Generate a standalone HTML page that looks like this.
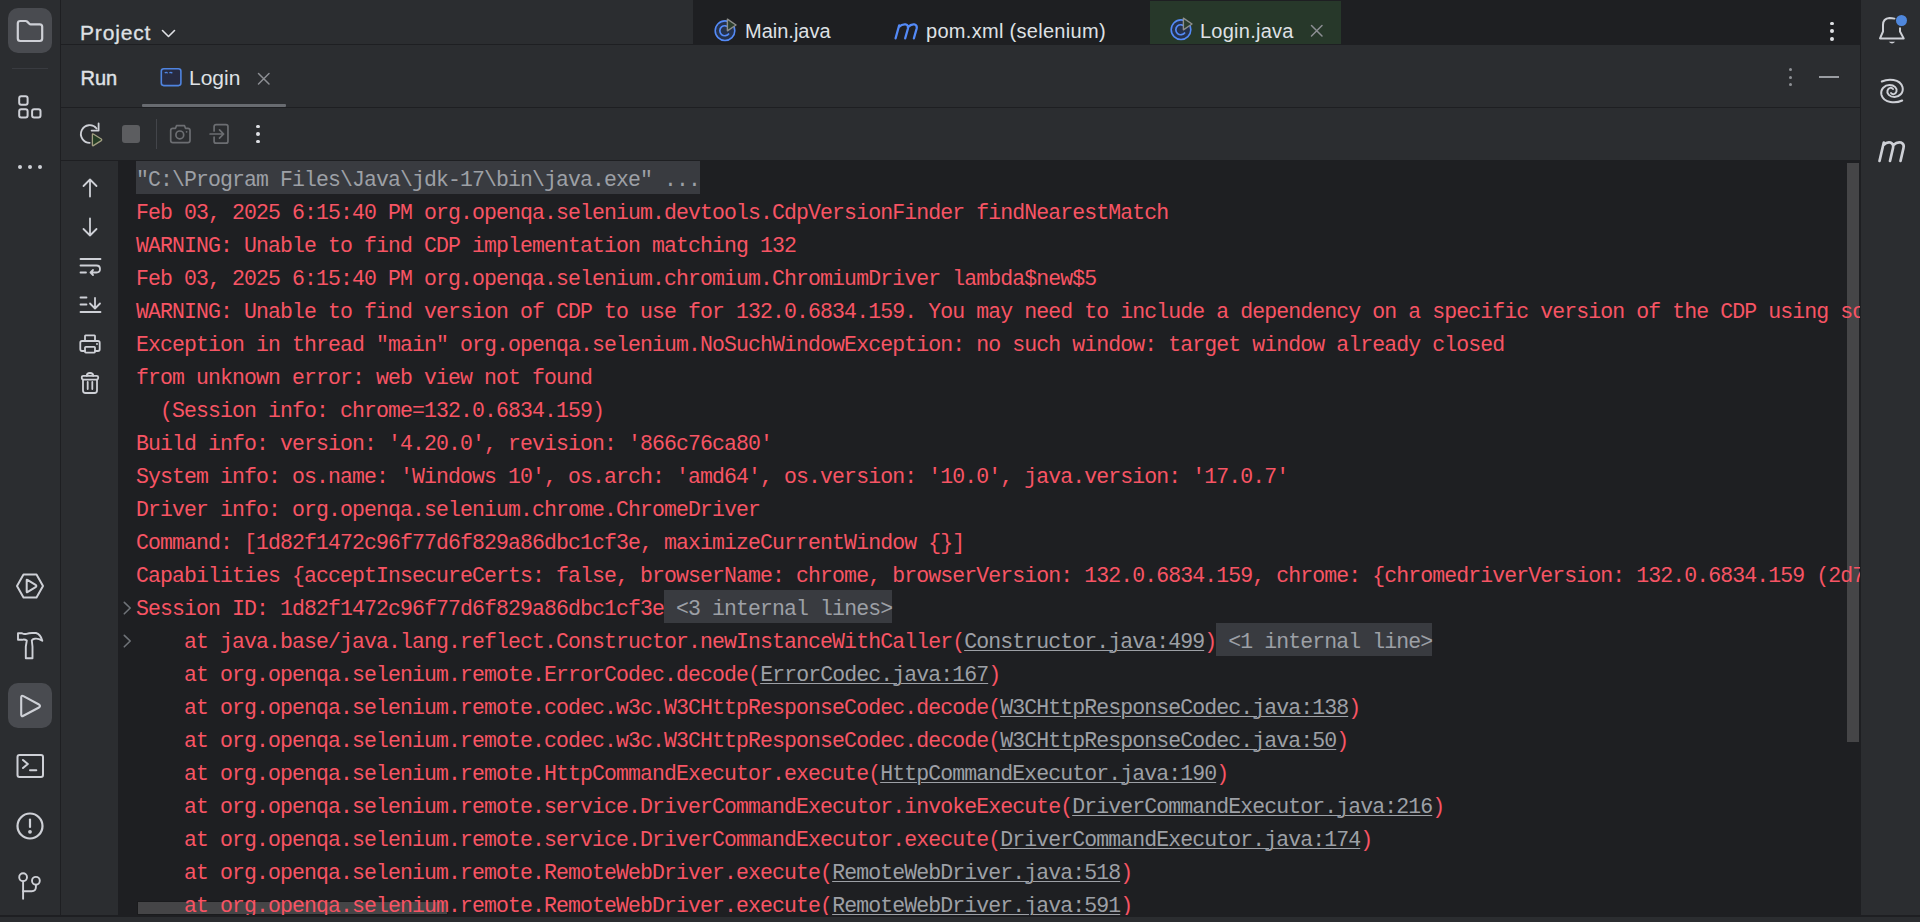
<!DOCTYPE html>
<html><head><meta charset="utf-8">
<style>
*{margin:0;padding:0;box-sizing:border-box}
html,body{width:1920px;height:922px;overflow:hidden;background:#2b2d30;font-family:"Liberation Sans",sans-serif}
.abs{position:absolute}
.hl{position:absolute;background:#494b50;border-radius:10px}
.ui{position:absolute;color:#dfe1e5;font-size:20px;white-space:nowrap;line-height:1}
.ln{position:absolute;left:136px;height:33px;white-space:pre;font-family:"Liberation Mono",monospace;font-size:21.5px;letter-spacing:-0.9px;line-height:33px}
.ln span{vertical-align:top;line-height:39px;height:33px}
.ln span{display:inline-block;height:33px}
.sys{color:#9da0a6;background:#393b40}
.err{color:#f75464}
.lnk{color:#9da0a6;text-decoration:underline;text-decoration-thickness:1px;text-underline-offset:2px}
.fold{color:#9da0a6;background:#393b40}
</style></head><body>
<!-- left toolbar -->
<div class="abs" style="left:0;top:0;width:60px;height:915px;background:#2b2d30"></div>
<div class="abs" style="left:60px;top:0;width:1px;height:915px;background:#1e1f22"></div>
<!-- right toolbar -->
<div class="abs" style="left:1860px;top:0;width:1px;height:915px;background:#1e1f22"></div>
<!-- top title row -->
<div class="abs" style="left:61px;top:44px;width:1799px;height:1px;background:#1e1f22"></div>
<div class="abs" style="left:693px;top:0;width:1167px;height:44px;background:#1e1f22"></div>
<div class="abs" style="left:1150px;top:1px;width:191px;height:43px;background:#27382a"></div>
<div class="ui" style="left:80px;top:21.8px;font-size:21px;letter-spacing:0.85px;-webkit-text-stroke:0.3px #dfe1e5">Project</div>
<!-- run header -->
<div class="abs" style="left:61px;top:107px;width:1799px;height:1px;background:#1e1f22"></div>
<div class="abs" style="left:142px;top:104px;width:144px;height:3px;background:#686b70;border-radius:1px"></div>
<div class="ui" style="left:80.5px;top:68px;font-size:20px;-webkit-text-stroke:0.45px #dfe1e5">Run</div>
<div class="ui" style="left:189px;top:67px;font-size:21px">Login</div>
<!-- toolbar row -->
<div class="abs" style="left:61px;top:160px;width:1799px;height:1px;background:#1e1f22"></div>
<!-- console -->
<div class="abs" style="left:118px;top:161px;width:1742px;height:754px;background:#1e1f22;overflow:hidden">
<div class="abs" style="left:-118px;top:-161px;width:1742px;height:915px">
<div class="abs" style="left:1847px;top:163px;width:12px;height:579px;background:#454547"></div>
<div class="abs" style="left:137px;top:901px;width:311px;height:14px;background:#1a1b1d"></div><div class="abs" style="left:138px;top:902px;width:309px;height:12px;background:#454547"></div>
<div class="ln" style="top:161px"><span class="sys">&quot;C:\Program Files\Java\jdk-17\bin\java.exe&quot; ...</span></div>
<div class="ln" style="top:194px"><span class="err">Feb 03, 2025 6:15:40 PM org.openqa.selenium.devtools.CdpVersionFinder findNearestMatch</span></div>
<div class="ln" style="top:227px"><span class="err">WARNING: Unable to find CDP implementation matching 132</span></div>
<div class="ln" style="top:260px"><span class="err">Feb 03, 2025 6:15:40 PM org.openqa.selenium.chromium.ChromiumDriver lambda$new$5</span></div>
<div class="ln" style="top:293px"><span class="err">WARNING: Unable to find version of CDP to use for 132.0.6834.159. You may need to include a dependency on a specific version of the CDP using something like `org.seleniumhq.selenium:selenium-devtools-v132` where the version matches</span></div>
<div class="ln" style="top:326px"><span class="err">Exception in thread &quot;main&quot; org.openqa.selenium.NoSuchWindowException: no such window: target window already closed</span></div>
<div class="ln" style="top:359px"><span class="err">from unknown error: web view not found</span></div>
<div class="ln" style="top:392px"><span class="err">  (Session info: chrome=132.0.6834.159)</span></div>
<div class="ln" style="top:425px"><span class="err">Build info: version: &#x27;4.20.0&#x27;, revision: &#x27;866c76ca80&#x27;</span></div>
<div class="ln" style="top:458px"><span class="err">System info: os.name: &#x27;Windows 10&#x27;, os.arch: &#x27;amd64&#x27;, os.version: &#x27;10.0&#x27;, java.version: &#x27;17.0.7&#x27;</span></div>
<div class="ln" style="top:491px"><span class="err">Driver info: org.openqa.selenium.chrome.ChromeDriver</span></div>
<div class="ln" style="top:524px"><span class="err">Command: [1d82f1472c96f77d6f829a86dbc1cf3e, maximizeCurrentWindow {}]</span></div>
<div class="ln" style="top:557px"><span class="err">Capabilities {acceptInsecureCerts: false, browserName: chrome, browserVersion: 132.0.6834.159, chrome: {chromedriverVersion: 132.0.6834.159 (2d77d3f0c5b5...</span></div>
<div class="ln" style="top:590px"><span class="err">Session ID: 1d82f1472c96f77d6f829a86dbc1cf3e</span><span class="fold"> &lt;3 internal lines&gt;</span></div>
<div class="ln" style="top:623px"><span class="err">    at java.base/java.lang.reflect.Constructor.newInstanceWithCaller(</span><span class="lnk">Constructor.java:499</span><span class="err">)</span><span class="fold"> &lt;1 internal line&gt;</span></div>
<div class="ln" style="top:656px"><span class="err">    at org.openqa.selenium.remote.ErrorCodec.decode(</span><span class="lnk">ErrorCodec.java:167</span><span class="err">)</span></div>
<div class="ln" style="top:689px"><span class="err">    at org.openqa.selenium.remote.codec.w3c.W3CHttpResponseCodec.decode(</span><span class="lnk">W3CHttpResponseCodec.java:138</span><span class="err">)</span></div>
<div class="ln" style="top:722px"><span class="err">    at org.openqa.selenium.remote.codec.w3c.W3CHttpResponseCodec.decode(</span><span class="lnk">W3CHttpResponseCodec.java:50</span><span class="err">)</span></div>
<div class="ln" style="top:755px"><span class="err">    at org.openqa.selenium.remote.HttpCommandExecutor.execute(</span><span class="lnk">HttpCommandExecutor.java:190</span><span class="err">)</span></div>
<div class="ln" style="top:788px"><span class="err">    at org.openqa.selenium.remote.service.DriverCommandExecutor.invokeExecute(</span><span class="lnk">DriverCommandExecutor.java:216</span><span class="err">)</span></div>
<div class="ln" style="top:821px"><span class="err">    at org.openqa.selenium.remote.service.DriverCommandExecutor.execute(</span><span class="lnk">DriverCommandExecutor.java:174</span><span class="err">)</span></div>
<div class="ln" style="top:854px"><span class="err">    at org.openqa.selenium.remote.RemoteWebDriver.execute(</span><span class="lnk">RemoteWebDriver.java:518</span><span class="err">)</span></div>
<div class="ln" style="top:887px"><span class="err">    at org.openqa.selenium.remote.RemoteWebDriver.execute(</span><span class="lnk">RemoteWebDriver.java:591</span><span class="err">)</span></div>
</div>
</div>
<!-- scrollbars -->


<!-- bottom border -->
<div class="abs" style="left:0;top:915px;width:1920px;height:2px;background:#1e1f22"></div>
<div class="abs" style="left:0;top:917px;width:1920px;height:5px;background:#2b2d30"></div>
<div class="hl" style="left:8px;top:8px;width:44px;height:45px"></div>
<svg style="position:absolute;left:14px;top:16px" width="32" height="30" fill="none" stroke="#ced0d6" stroke-width="2.2" stroke-linecap="round" stroke-linejoin="round"><path d="M3.8 7.5 Q3.8 5 6.3 5 L11.8 5 Q12.6 5 13.2 5.6 L15.3 7.7 Q15.9 8.3 16.7 8.3 L25.7 8.3 Q28.2 8.3 28.2 10.8 L28.2 22.5 Q28.2 25 25.7 25 L6.3 25 Q3.8 25 3.8 22.5 Z"/></svg>
<div style="position:absolute;left:12px;top:68px;width:36px;height:1px;background:#393b40"></div>
<svg style="position:absolute;left:14px;top:91px" width="32" height="32" fill="none" stroke="#ced0d6" stroke-width="2" stroke-linecap="round" stroke-linejoin="round"><rect x="5.2" y="5.3" width="8.4" height="8.4" rx="2"/><rect x="5.2" y="18.2" width="8.4" height="8.4" rx="2"/><rect x="18.1" y="18.2" width="8.4" height="8.4" rx="2"/></svg>
<div style="position:absolute;left:17.8px;top:164.8px;width:4.4px;height:4.4px;border-radius:50%;background:#ced0d6"></div>
<div style="position:absolute;left:27.8px;top:164.8px;width:4.4px;height:4.4px;border-radius:50%;background:#ced0d6"></div>
<div style="position:absolute;left:37.8px;top:164.8px;width:4.4px;height:4.4px;border-radius:50%;background:#ced0d6"></div>
<svg style="position:absolute;left:14px;top:570px" width="32" height="32" fill="none" stroke="#ced0d6" stroke-width="2" stroke-linecap="round" stroke-linejoin="round"><path d="M9.5 4.5 L22.5 4.5 L29 16 L22.5 27.5 L9.5 27.5 L3 16 Z"/><path d="M12.7 10.2 Q12.7 9.4 13.4 9.8 L22 15.2 Q22.8 16 22 16.8 L13.4 22.2 Q12.7 22.6 12.7 21.8 Z"/></svg>
<svg style="position:absolute;left:10px;top:625px" width="40" height="40" fill="none" stroke="#ced0d6" stroke-width="1.9" stroke-linecap="round" stroke-linejoin="round"><path d="M8 8.2 L12 8.2 Q14 9.5 16.5 8.8 Q19 8 22 8 L26 8 Q30.5 9 32.3 15.8 Q28 13 24.5 13.8 Q22.5 14.2 21.8 15.5 L22.5 21.5 L22.5 33.3 L15.8 33.3 L15.8 21.5 L16.8 15.5 Q14.5 13.8 12 14.8 L8 14.8 Z"/></svg>
<div class="hl" style="left:8px;top:683px;width:44px;height:45px"></div>
<svg style="position:absolute;left:14px;top:690px" width="32" height="32" fill="none" stroke="#ced0d6" stroke-width="2.1" stroke-linecap="round" stroke-linejoin="round"><path d="M7.2 7.5 Q7.2 5 9.4 6.2 L25 14.5 Q27 16 25 17.5 L9.4 25.8 Q7.2 27 7.2 24.5 Z"/></svg>
<svg style="position:absolute;left:14px;top:750px" width="32" height="32" fill="none" stroke="#ced0d6" stroke-width="2" stroke-linecap="round" stroke-linejoin="round"><rect x="3.5" y="5" width="25.5" height="22" rx="2"/><path d="M9 10 L13.8 14 L9 18"/><path d="M16 20.3 L22.3 20.3"/></svg>
<svg style="position:absolute;left:14px;top:810px" width="32" height="32" fill="none" stroke="#ced0d6" stroke-width="2.2" stroke-linecap="round" stroke-linejoin="round"><circle cx="16" cy="16" r="12.5"/><path d="M16 9.5 L16 17"/><circle cx="16" cy="21.8" r="0.8" fill="#ced0d6"/></svg>
<svg style="position:absolute;left:14px;top:870px" width="32" height="32" fill="none" stroke="#ced0d6" stroke-width="1.9" stroke-linecap="round" stroke-linejoin="round"><circle cx="9.1" cy="7.2" r="3.9"/><circle cx="21.9" cy="10.8" r="3.9"/><path d="M9.1 11.1 L9.1 28.8"/><path d="M21.9 14.7 L21.9 17 Q21.9 21.2 17.7 21.2 L9.1 21.2"/></svg>
<svg style="position:absolute;left:1872px;top:10px" width="40" height="40" fill="none" stroke="#ced0d6" stroke-width="2" stroke-linecap="round" stroke-linejoin="round"><path d="M22.5 8.6 Q20 8 17.5 8 Q11 8.5 11 15 L11 21.5 L8 28.4 L31.7 28.4 L28 21.5 L28 18.2"/></svg>
<svg style="position:absolute;left:1872px;top:10px" width="40" height="40"><path d="M16.8 31.8 Q20 35.2 23.2 31.8 Z" fill="#ced0d6"/></svg>
<div style="position:absolute;left:1896px;top:15.2px;width:11px;height:11px;border-radius:50%;background:#4f87dc"></div>
<svg style="position:absolute;left:1872px;top:66px" width="40" height="50" fill="none" stroke="#ced0d6" stroke-width="2" stroke-linecap="round" stroke-linejoin="round"><path d="M9.8 15.5 C16 12.5, 28 12.5, 30.5 21 C32 27, 27 31, 22.5 31 C17.5 31, 14.5 27.5, 15.5 24.5 C16.5 21.5, 19.5 21, 21 23"/><path d="M30.2 34.5 C24 37.5, 12 37.5, 9.5 29 C8 23, 13 19, 17.5 19 C22.5 19, 25.5 22.5, 24.5 25.5 C23.5 28.5, 20.5 29, 19 27"/></svg>
<svg style="position:absolute;left:1874px;top:136px" width="36" height="30" fill="none" stroke="#ced0d6" stroke-width="2.7" stroke-linecap="round" stroke-linejoin="round"><path d="M5.5 25 L9.8 6.5 M9.5 9 Q13 5.5 16.5 6.5 Q20 8 19 12 L16 25 M19.5 9 Q23 5.5 27 6.5 Q30.5 8 29.5 12 L26.5 25"/></svg>
<svg style="position:absolute;left:714px;top:14px" width="30" height="30"><circle cx="11" cy="16.7" r="9.8" fill="#25324d" stroke="#548af7" stroke-width="1.6"/><path d="M15 14 A5 5 0 1 0 15 19.5" fill="none" stroke="#548af7" stroke-width="1.7"/><path d="M13.4 5.2 L13.4 16.8 L22 11 Z" fill="#2b3d2c" stroke="#8e8f8c" stroke-width="1.4" stroke-linejoin="round"/></svg>
<div class="ui" style="left:745px;top:21px;font-size:20px">Main.java</div>
<svg style="position:absolute;left:890px;top:18px" width="32" height="26" fill="none" stroke="#548af7" stroke-width="2.3" stroke-linecap="round" stroke-linejoin="round"><path d="M5.6 20.3 L9.2 7.3 M9 8.8 Q12 6 15.5 6.4 Q18.8 7.2 17.9 10.8 L15.2 20.3 M17.9 9.3 Q20.8 6 24.2 6.4 Q27.5 7.2 26.6 10.8 L23.9 20.3"/></svg>
<div class="ui" style="left:926px;top:21px;font-size:20px;letter-spacing:0.3px">pom.xml (selenium)</div>
<svg style="position:absolute;left:1170px;top:13px" width="30" height="30"><circle cx="11" cy="16.7" r="9.8" fill="#25324d" stroke="#548af7" stroke-width="1.6"/><path d="M15 14 A5 5 0 1 0 15 19.5" fill="none" stroke="#548af7" stroke-width="1.7"/><path d="M13.4 5.2 L13.4 16.8 L22 11 Z" fill="#2b3d2c" stroke="#8e8f8c" stroke-width="1.4" stroke-linejoin="round"/></svg>
<div class="ui" style="left:1200px;top:21px;font-size:20px;letter-spacing:0.25px">Login.java</div>
<svg style="position:absolute;left:1308px;top:22px" width="18" height="18" fill="none" stroke="#8c8e93" stroke-width="1.5" stroke-linecap="round" stroke-linejoin="round"><path d="M3.5 3.5 L14 14 M14 3.5 L3.5 14"/></svg>
<div style="position:absolute;left:1830.1px;top:21.6px;width:3.8px;height:3.8px;border-radius:50%;background:#dfe1e5"></div><div style="position:absolute;left:1830.1px;top:29.1px;width:3.8px;height:3.8px;border-radius:50%;background:#dfe1e5"></div><div style="position:absolute;left:1830.1px;top:36.8px;width:3.8px;height:3.8px;border-radius:50%;background:#dfe1e5"></div>
<svg style="position:absolute;left:158px;top:26.3px" width="22" height="14" fill="none" stroke="#dfe1e5" stroke-width="1.6" stroke-linecap="round" stroke-linejoin="round"><path d="M4.5 4.5 L10.5 10.5 L16.5 4.5"/></svg>
<svg style="position:absolute;left:159px;top:66px" width="24" height="22"><rect x="2.3" y="2.8" width="19.6" height="16.8" rx="2.5" fill="#272b42" stroke="#4f84e0" stroke-width="1.6"/><path d="M5.8 7.2 Q7.1 5.6 8.6 7.2 M10.5 7.2 Q11.8 5.6 13.3 7.2" stroke="#4f84e0" stroke-width="1.3" fill="none"/></svg>
<svg style="position:absolute;left:255px;top:70px" width="18" height="18" fill="none" stroke="#8c8e93" stroke-width="1.5" stroke-linecap="round" stroke-linejoin="round"><path d="M3.5 3.5 L14 14 M14 3.5 L3.5 14"/></svg>
<div style="position:absolute;left:1788.5px;top:68.0px;width:3.0px;height:3.0px;border-radius:50%;background:#8e9196"></div><div style="position:absolute;left:1788.5px;top:75.5px;width:3.0px;height:3.0px;border-radius:50%;background:#8e9196"></div><div style="position:absolute;left:1788.5px;top:83.0px;width:3.0px;height:3.0px;border-radius:50%;background:#8e9196"></div>
<div style="position:absolute;left:1819px;top:76.3px;width:19.5px;height:1.6px;background:#9a9da2"></div>
<svg style="position:absolute;left:76px;top:118px" width="32" height="32" fill="none" stroke="#ced0d6" stroke-width="1.8" stroke-linecap="round" stroke-linejoin="round"><path d="M13.7 24.8 A8.8 8.8 0 1 1 20.6 10.5"/><path d="M22.6 5.4 L22.6 12.6 L15.6 12.6"/></svg>
<svg style="position:absolute;left:88px;top:130px" width="18" height="20"><path d="M4.4 4.4 Q4.4 3.5 5.3 4 L13.3 9 Q14.2 9.9 13.3 10.6 L5.3 15.6 Q4.4 16.1 4.4 15.1 Z" fill="#253d25" stroke="#a29f82" stroke-width="1.3" stroke-linejoin="round"/></svg>
<div style="position:absolute;left:122px;top:125px;width:18px;height:18px;border-radius:3px;background:#5c5d60"></div>
<div style="position:absolute;left:155.5px;top:119px;width:1px;height:30px;background:#43454a"></div>
<svg style="position:absolute;left:166px;top:120px" width="28" height="28" fill="none" stroke="#6c6e72" stroke-width="1.7" stroke-linecap="round" stroke-linejoin="round"><path d="M4.7 10.5 Q4.7 8.3 6.9 8.3 L9.5 8.3 L10.5 5.7 L18.5 5.7 L19.5 8.3 L21.8 8.3 Q24 8.3 24 10.5 L24 20.5 Q24 22.6 21.8 22.6 L6.9 22.6 Q4.7 22.6 4.7 20.5 Z"/><circle cx="13.8" cy="14.9" r="3.9"/><circle cx="20.6" cy="11.8" r="0.9" fill="#6c6e72" stroke="none"/></svg>
<svg style="position:absolute;left:206px;top:118px" width="28" height="30" fill="none" stroke="#6c6e72" stroke-width="1.7" stroke-linecap="round" stroke-linejoin="round"><path d="M8.1 12.9 L8.1 8.5 Q8.1 6.55 10.1 6.55 L19.95 6.55 Q21.95 6.55 21.95 8.5 L21.95 23.15 Q21.95 25.15 19.95 25.15 L10.1 25.15 Q8.1 25.15 8.1 23.15 L8.1 19.2"/><path d="M4.1 16 L17.6 16 M13.5 11.8 L17.6 16 L13.5 20.2"/></svg>
<div style="position:absolute;left:256.1px;top:124.7px;width:3.8px;height:3.8px;border-radius:50%;background:#dfe1e5"></div><div style="position:absolute;left:256.1px;top:132.1px;width:3.8px;height:3.8px;border-radius:50%;background:#dfe1e5"></div><div style="position:absolute;left:256.1px;top:139.6px;width:3.8px;height:3.8px;border-radius:50%;background:#dfe1e5"></div>
<svg style="position:absolute;left:74px;top:170px" width="32" height="32" fill="none" stroke="#ced0d6" stroke-width="1.8" stroke-linecap="round" stroke-linejoin="round"><path d="M16 9.5 L16 26.5 M9.5 16 L16 9.5 L22.5 16"/></svg>
<svg style="position:absolute;left:74px;top:210px" width="32" height="32" fill="none" stroke="#ced0d6" stroke-width="1.8" stroke-linecap="round" stroke-linejoin="round"><path d="M16 8.5 L16 25.5 M9.5 19 L16 25.5 L22.5 19"/></svg>
<svg style="position:absolute;left:74px;top:250px" width="32" height="32" fill="none" stroke="#ced0d6" stroke-width="1.8" stroke-linecap="round" stroke-linejoin="round"><path d="M6.5 9 L26.5 9 M6.5 15.5 L22.5 15.5 Q26 15.5 26 19 Q26 22.5 22.5 22.5 L16.5 22.5 M19 20 L16.5 22.5 L19 25 M6.5 22.5 L12 22.5"/></svg>
<svg style="position:absolute;left:74px;top:288px" width="32" height="32" fill="none" stroke="#ced0d6" stroke-width="1.8" stroke-linecap="round" stroke-linejoin="round"><path d="M6.5 9.5 L12.5 9.5 M6.5 16.5 L12.5 16.5 M6.5 24 L26.5 24 M21 10 L21 20 M16 15.5 L21 20.5 L26 15.5"/></svg>
<svg style="position:absolute;left:74px;top:328px" width="32" height="32" fill="none" stroke="#ced0d6" stroke-width="1.8" stroke-linecap="round" stroke-linejoin="round"><path d="M11 12.5 L11 8 Q11 7.4 11.6 7.4 L20.4 7.4 Q21 7.4 21 8 L21 12.5"/><path d="M11 23 L8 23 Q6.3 23 6.3 21.3 L6.3 14.7 Q6.3 13 8 13 L24 13 Q25.7 13 25.7 14.7 L25.7 21.3 Q25.7 23 24 23 L21 23"/><rect x="11" y="18.8" width="10" height="5.8" rx="0.8"/></svg><div style="position:absolute;left:96px;top:343px;width:2px;height:2px;border-radius:50%;background:#ced0d6"></div>
<svg style="position:absolute;left:74px;top:368px" width="32" height="32" fill="none" stroke="#ced0d6" stroke-width="1.8" stroke-linecap="round" stroke-linejoin="round"><rect x="7.8" y="7.8" width="16.4" height="3.8" rx="1.5"/><path d="M12.8 7.8 Q12.8 5 16 5 Q19.2 5 19.2 7.8"/><path d="M9 11.6 L9 22.5 Q9 25 11.5 25 L20.5 25 Q23 25 23 22.5 L23 11.6"/><path d="M13.7 14 L13.7 21 M18.3 14 L18.3 21"/></svg>
<svg style="position:absolute;left:118px;top:598px" width="18" height="20" fill="none" stroke="#6f7378" stroke-width="1.6" stroke-linecap="round" stroke-linejoin="round"><path d="M6.3 4.3 L12.2 10 L6.3 15.8"/></svg>
<svg style="position:absolute;left:118px;top:631px" width="18" height="20" fill="none" stroke="#6f7378" stroke-width="1.6" stroke-linecap="round" stroke-linejoin="round"><path d="M6.3 4.3 L12.2 10 L6.3 15.8"/></svg>
</body></html>
